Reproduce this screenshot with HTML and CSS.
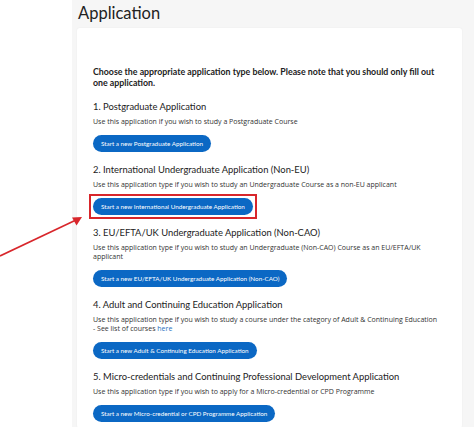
FILE: index.html
```html
<!DOCTYPE html>
<html>
<head>
<meta charset="utf-8">
<link rel="stylesheet" href="styles.css">
</head>
<body>
<div class="page">
  <h1 class="title">Application</h1>
  <div class="card">
    <p class="intro">Choose the appropriate application type below. Please note that you should only fill out one application.</p>

    <section class="app">
      <h2 class="app-title">1. Postgraduate Application</h2>
      <p class="app-desc">Use this application if you wish to study a Postgraduate Course</p>
      <button class="btn">Start a new Postgraduate Application</button>
    </section>

    <section class="app">
      <h2 class="app-title">2. International Undergraduate Application (Non-EU)</h2>
      <p class="app-desc">Use this application type if you wish to study an Undergraduate Course as a non-EU applicant</p>
      <button class="btn btn-marked">Start a new International Undergraduate Application</button>
    </section>

    <section class="app">
      <h2 class="app-title">3. EU/EFTA/UK Undergraduate Application (Non-CAO)</h2>
      <p class="app-desc">Use this application type if you wish to study an Undergraduate (Non-CAO) Course as an EU/EFTA/UK applicant</p>
      <button class="btn">Start a new EU/EFTA/UK Undergraduate Application (Non-CAO)</button>
    </section>

    <section class="app">
      <h2 class="app-title">4. Adult and Continuing Education Application</h2>
      <p class="app-desc"><span class="nowrap">Use this application type if you wish to study a course under the category of Adult &amp; Continuing Education</span><br>- See list of courses <a class="link" href="#">here</a></p>
      <button class="btn">Start a new Adult &amp; Continuing Education Application</button>
    </section>

    <section class="app">
      <h2 class="app-title">5. Micro-credentials and Continuing Professional Development Application</h2>
      <p class="app-desc">Use this application type if you wish to apply for a Micro-credential or CPD Programme</p>
      <button class="btn">Start a new Micro-credential or CPD Programme Application</button>
    </section>
  </div>
</div>
<svg class="arrow" width="90" height="60" viewBox="0 0 90 60">
  <line x1="0" y1="46" x2="76" y2="10" stroke="#d8262b" stroke-width="1.6"/>
  <polygon points="82,7 72,7.5 76.5,15.5" fill="#d8262b"/>
</svg>
</body>
</html>
```

FILE: styles.css
```css
html, body {
  margin: 0;
  padding: 0;
  background: #ffffff;
}

body {
  position: relative;
  width: 474px;
  height: 427px;
  overflow: hidden;
  font-family: "Open Sans", "Noto Sans", sans-serif;
  color: #222;
}

.page {
  margin-left: 72px;
  background: #f6f6f6;
  height: 427px;
  padding: 3px 12px 0 5px;
  box-sizing: border-box;
}

.title {
  margin: 0 0 5px 1px;
  font-family: "Lato", sans-serif;
  font-weight: 400;
  font-size: 16.5px;
  line-height: 20px;
  color: #222;
}

.card {
  background: #fff;
  border-radius: 3px;
  box-shadow: 0 0 2px rgba(0,0,0,0.06);
  padding: 38px 10px 20px 16px;
  height: 400px;
  box-sizing: border-box;
}

.intro {
  max-width: 358px;
  margin: 0 0 12px 0;
  font-family: "Lato", sans-serif;
  font-weight: 700;
  font-size: 8.8px;
  line-height: 11px;
  color: #222;
}

.app {
  margin: 0 0 11px 0;
}

.app-title {
  margin: 0 0 3px 0;
  font-family: "Lato", sans-serif;
  font-weight: 400;
  font-size: 9.4px;
  line-height: 14px;
  color: #222;
}

.app-desc {
  margin: 0;
  font-family: "Open Sans", sans-serif;
  font-size: 7px;
  line-height: 9px;
  color: #333;
}

.nowrap {
  white-space: nowrap;
}

.link {
  color: #2a6fc0;
  text-decoration: none;
}

.btn {
  display: inline-block;
  position: relative;
  margin-top: 9px;
  height: 17px;
  padding: 0 8px;
  border: 0;
  border-radius: 9px;
  background: #0b68c4;
  color: #fff;
  font-family: "Lato", sans-serif;
  font-size: 6.3px;
  line-height: 17px;
  vertical-align: top;
}

.btn-marked::after {
  content: "";
  position: absolute;
  left: -4px;
  right: -4px;
  top: -4px;
  bottom: -4px;
  border: 2px solid #d8262b;
}

.arrow {
  position: absolute;
  left: 0;
  top: 210px;
}
```
